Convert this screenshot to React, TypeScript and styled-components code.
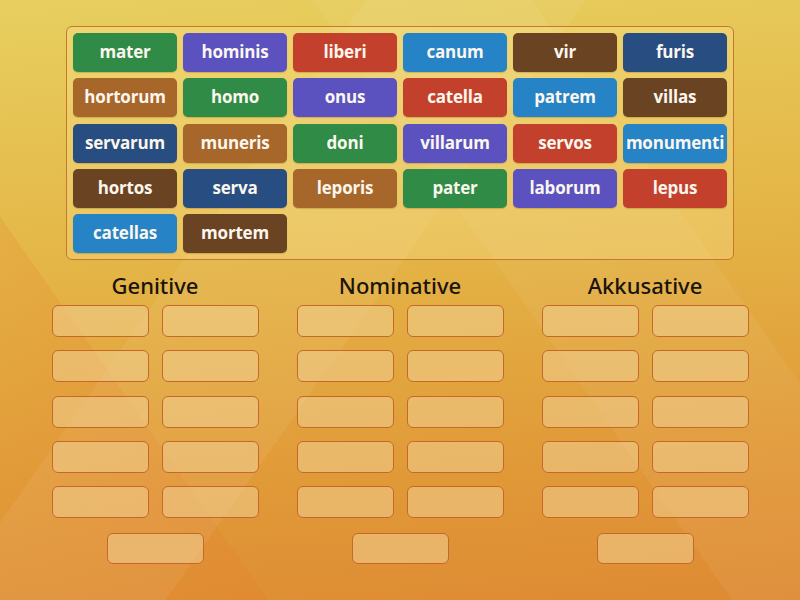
import styled, { createGlobalStyle } from 'styled-components'

const GlobalStyle = createGlobalStyle`
  html, body {
    margin: 0;
    padding: 0;
  }
  body {
    width: 800px;
    height: 600px;
    overflow: hidden;
    font-family: "Open Sans", "Noto Sans", sans-serif;
    background-color: #e2ad42;
    background-image:
      linear-gradient(125deg, rgba(255,255,255,0) 0%, rgba(255,255,255,0) 30%, rgba(255,255,255,0.06) 30%, rgba(255,255,255,0.06) 48%, rgba(255,255,255,0) 48%),
      linear-gradient(55deg, rgba(230,120,40,0) 0%, rgba(230,120,40,0.18) 22%, rgba(230,120,40,0) 22%, rgba(230,120,40,0) 60%, rgba(255,255,255,0.05) 60%, rgba(255,255,255,0.05) 78%, rgba(255,255,255,0) 78%),
      linear-gradient(175deg, #e7cf5f 0%, #e4b647 40%, #e19a38 75%, #de8a33 100%);
  }
`

const Page = styled.div`
  width: 800px;
  height: 600px;
  padding-top: 26px;
  box-sizing: border-box;
  display: flex;
  flex-direction: column;
  align-items: center;
`

const Bank = styled.div`
  width: 668px;
  box-sizing: border-box;
  padding: 6px;
  border: 1px solid #c8782c;
  border-radius: 6px;
  background: rgba(255, 236, 160, 0.28);
  display: grid;
  grid-template-columns: repeat(6, 104px);
  grid-auto-rows: 39px;
  column-gap: 6px;
  row-gap: 6.3px;
`

const Tile = styled.div<{ $bg: string }>`
  background: ${p => p.$bg};
  border-radius: 5px;
  color: #fbf6ee;
  font-weight: 700;
  font-size: 17px;
  letter-spacing: -0.2px;
  padding-bottom: 2px;
  box-sizing: border-box;
  display: flex;
  align-items: center;
  justify-content: center;
  white-space: nowrap;
  overflow: hidden;
  box-shadow: 0 1px 1px rgba(120, 70, 10, 0.25);
`

const Groups = styled.div`
  display: flex;
  gap: 38px;
  margin-top: 12px;
`

const Group = styled.div`
  width: 207px;
  display: flex;
  flex-direction: column;
  align-items: center;
`

const Heading = styled.div`
  font-family: "Noto Sans", "Open Sans", sans-serif;
  font-size: 22px;
  font-weight: 500;
  color: #1a140c;
  line-height: 26px;
  margin-bottom: 7px;
`

const Slots = styled.div`
  display: grid;
  grid-template-columns: repeat(2, 97px);
  grid-auto-rows: 32px;
  column-gap: 13px;
  row-gap: 13.3px;
  justify-content: center;
`

const Slot = styled.div<{ $last?: boolean }>`
  border: 1px solid #c6682a;
  border-radius: 6px;
  background: rgba(240, 208, 145, 0.55);
  box-sizing: border-box;
  ${p => p.$last && 'grid-column: 1 / span 2; justify-self: center; width: 97px; margin-top: 1px;'}
`

const C = {
  green: '#2f8b45',
  purple: '#5b52bf',
  red: '#c3412c',
  blue: '#2583c6',
  brown: '#6a4322',
  navy: '#284d80',
  tan: '#a7672a',
}

const words: [string, string][] = [
  ['mater', C.green], ['hominis', C.purple], ['liberi', C.red], ['canum', C.blue], ['vir', C.brown], ['furis', C.navy],
  ['hortorum', C.tan], ['homo', C.green], ['onus', C.purple], ['catella', C.red], ['patrem', C.blue], ['villas', C.brown],
  ['servarum', C.navy], ['muneris', C.tan], ['doni', C.green], ['villarum', C.purple], ['servos', C.red], ['monumenti', C.blue],
  ['hortos', C.brown], ['serva', C.navy], ['leporis', C.tan], ['pater', C.green], ['laborum', C.purple], ['lepus', C.red],
  ['catellas', C.blue], ['mortem', C.brown],
]

const groups = ['Genitive', 'Nominative', 'Akkusative']

export default function App() {
  return (
    <>
      <GlobalStyle />
      <Page>
        <Bank>
          {words.map(([w, bg]) => (
            <Tile key={w} $bg={bg}>{w}</Tile>
          ))}
        </Bank>
        <Groups>
          {groups.map(g => (
            <Group key={g}>
              <Heading>{g}</Heading>
              <Slots>
                {Array.from({ length: 10 }).map((_, i) => (
                  <Slot key={i} />
                ))}
                <Slot $last />
              </Slots>
            </Group>
          ))}
        </Groups>
      </Page>
    </>
  )
}
